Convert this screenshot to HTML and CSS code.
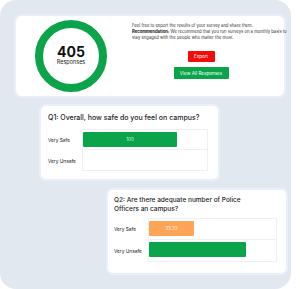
FILE: index.html
```html
<!DOCTYPE html>
<html>
<head>
<meta charset="utf-8">
<link rel="stylesheet" href="styles.css">
</head>
<body>
<div class="frame">
  <section class="card summary">
    <div class="ring">
      <div class="count">405</div>
      <div class="count-label">Responses</div>
    </div>
    <div class="info">
      <p class="note"><span class="line">Feel free to export the results of your survey and share them.</span><span class="line"><b>Recommendation:</b> We recommend that you run surveys on a monthly basis to</span><span class="line">stay engaged with the people who matter the most.</span></p>
      <div class="actions">
        <span class="btn btn-red">Export</span>
        <span class="btn btn-green">View All Responses</span>
      </div>
    </div>
  </section>

  <section class="card q q1">
    <h2 class="q-title">Q1: Overall, how safe do you feel on campus?</h2>
    <div class="chart">
      <div class="label">Very Safe</div>
      <div class="cell"><div class="bar green" style="width:94px">100</div></div>
      <div class="label">Very Unsafe</div>
      <div class="cell"></div>
    </div>
  </section>

  <section class="card q q2">
    <h2 class="q-title">Q2: Are there adequate number of Police Officers an campus?</h2>
    <div class="chart">
      <div class="label">Very Safe</div>
      <div class="cell"><div class="bar orange" style="width:45px">33.33</div></div>
      <div class="label">Very Unsafe</div>
      <div class="cell"><div class="bar green" style="width:97px"></div></div>
    </div>
  </section>
</div>
</body>
</html>
```
FILE: styles.css
```css
* { box-sizing: border-box; }
html, body { margin: 0; padding: 0; background: #ffffff; }
body { font-family: "Inter", "Noto Sans", sans-serif; color: #1a1a1a; }

.frame {
  width: 291px;
  height: 289px;
  background: #e2e8f0;
  border-radius: 16px;
  padding-top: 14px;
  display: flex;
  flex-direction: column;
  align-items: flex-start;
}

.card {
  background: #ffffff;
  border: 2px solid #e9f0fb;
  border-radius: 8px;
}

.summary {
  margin-left: 14px;
  width: 272px;
  height: 84px;
  display: flex;
  align-items: flex-start;
  padding: 4px 0 0 19px;
}

.ring {
  width: 72px;
  height: 72px;
  border-radius: 50%;
  border: 8px solid #0ba44b;
  display: flex;
  flex-direction: column;
  align-items: center;
  justify-content: center;
  flex-shrink: 0;
}
.count { font-size: 14px; font-weight: 700; line-height: 14px; color: #111; margin-top: -2px; }
.count-label { font-size: 5.5px; line-height: 7px; color: #222; }

.info {
  margin-left: 25px;
  width: 148px;
  padding-top: 3px;
}
.note {
  margin: 0;
  font-size: 4.2px;
  line-height: 6px;
  color: #333;
}
.line { display: block; white-space: nowrap; }
.note b { color: #111; font-weight: 700; }

.actions {
  display: flex;
  flex-direction: column;
  align-items: center;
  gap: 5px;
  margin-top: 10px;
  width: 138px;
}
.btn {
  display: flex;
  align-items: center;
  justify-content: center;
  color: #fff;
  font-size: 4.6px;
  border-radius: 1px;
}
.btn-red { width: 27px; height: 11px; background: #f20c0c; }
.btn-green { width: 55px; height: 12px; background: #0ba44b; }

.q { border-radius: 7px; }
.q1 {
  margin-left: 39px;
  margin-top: 6px;
  width: 181px;
  height: 77px;
  padding: 7px 10px 0 7px;
}
.q2 {
  margin-left: 106px;
  margin-top: 7px;
  width: 182px;
  height: 87px;
  padding: 6px 9px 0 6px;
}

.q-title {
  margin: 0;
  font-size: 7px;
  font-weight: 500;
  line-height: 9px;
  color: #1d1d1d;
}
.q2 .q-title { font-size: 6.5px; padding-right: 20px; }

.chart {
  display: grid;
  grid-template-columns: 34px 1fr;
  margin-top: 7px;
}
.q2 .chart { margin-top: 4px; }

.label {
  display: flex;
  align-items: center;
  font-size: 4.8px;
  color: #222;
  height: 21px;
}
.q2 .label { height: 22px; }

.cell {
  border: 1px solid #eef0f3;
  height: 21px;
  padding: 2px 0 0 0;
}
.q2 .cell { height: 22px; }
.cell + .label + .cell { border-top: none; }

.bar {
  height: 15px;
  display: flex;
  align-items: center;
  justify-content: center;
  color: #d8f3e2;
  font-size: 4.6px;
  border-radius: 1px;
}
.green { background: #0ba44b; }
.orange { background: #fda456; color: #fff2e6; }
```
